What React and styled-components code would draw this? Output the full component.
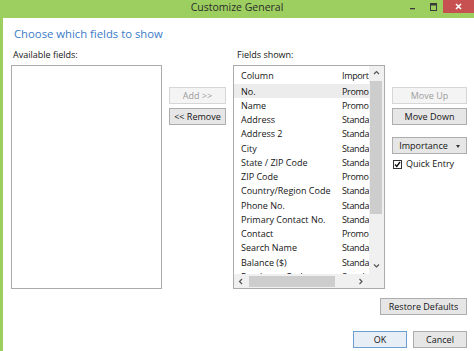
import React from 'react';
import styled, { createGlobalStyle } from 'styled-components';

const FONT = `"Open Sans", "Noto Sans", "DejaVu Sans", sans-serif`;

const Global = createGlobalStyle`
  html, body { margin: 0; padding: 0; background: #fff; }
  body { font-family: ${FONT}; }
  * { box-sizing: border-box; }
`;

const Window = styled.div`
  width: 474px;
  height: 351px;
  background: #9ccf5f;
  display: flex;
  flex-direction: column;
  overflow: hidden;
  font-family: ${FONT};
  font-size: 9px;
  color: #151515;
`;

const TitleBar = styled.div`
  height: 18px;
  flex: none;
  display: grid;
  grid-template-columns: 1fr auto 1fr;
  align-items: start;
`;

const Title = styled.div`
  grid-column: 2;
  font-size: 10.5px;
  line-height: 15px;
  color: #2a2a2a;
`;

const Controls = styled.div`
  grid-column: 3;
  justify-self: end;
  display: flex;
  height: 13px;
`;

const CtrlButton = styled.div`
  width: ${(p) => p.$w}px;
  height: 13px;
  display: flex;
  align-items: center;
  justify-content: center;
  background: ${(p) => (p.$close ? '#c75050' : 'transparent')};
`;

const Content = styled.div`
  flex: 1;
  margin-left: 3px;
  background: #fff;
  padding: 8px 7px 0 8px;
  display: flex;
  flex-direction: column;
`;

const Heading = styled.div`
  font-size: 11.3px;
  line-height: 16px;
  color: #3a7bc8;
  margin-left: 3px;
`;

const Main = styled.div`
  margin-top: 7px;
  display: grid;
  grid-template-columns: 151px 57px 152px 75px;
  grid-template-rows: auto 224px;
  column-gap: 7px;
  row-gap: 4px;
`;

const Label = styled.div`
  grid-column: ${(p) => p.$col};
  line-height: 12px;
  margin-left: ${(p) => p.$indent}px;
`;

const ListBox = styled.div`
  grid-column: 1;
  grid-row: 2;
  border: 1px solid #ababab;
  background: #fff;
`;

const ButtonColumn = styled.div`
  grid-column: ${(p) => p.$col};
  grid-row: 2;
  display: flex;
  flex-direction: column;
  gap: 4px;
  padding-top: 22px;
`;

const Button = styled.div`
  height: 17px;
  width: ${(p) => (p.$w ? `${p.$w}px` : 'auto')};
  border: 1px solid ${(p) => (p.$disabled ? '#d6d6d6' : p.$default ? '#6c9fcf' : '#adadad')};
  background: ${(p) => (p.$disabled ? '#f4f4f4' : p.$default ? '#e8eef5' : '#e6e6e6')};
  color: ${(p) => (p.$disabled ? '#9c9c9c' : '#151515')};
  display: flex;
  align-items: center;
  justify-content: center;
  font-size: 9px;
  line-height: 15px;
  white-space: nowrap;
  margin-top: ${(p) => p.$mt || 0}px;
  position: relative;
`;

const ButtonText = styled.span`
  margin-right: ${(p) => p.$shift || 0}px;
`;

const DropArrow = styled.span`
  position: absolute;
  right: 6px;
  top: 7px;
  width: 0;
  height: 0;
  border-left: 2px solid transparent;
  border-right: 2px solid transparent;
  border-top: 3px solid #333;
`;

const CheckRow = styled.label`
  display: flex;
  align-items: center;
  gap: 4px;
  padding-left: 1px;
  line-height: 12px;
`;

const CheckBox = styled.span`
  width: 9px;
  height: 9px;
  border: 1px solid #333;
  background: #fff;
  display: flex;
  align-items: center;
  justify-content: center;
`;

const FieldList = styled.div`
  grid-column: 3;
  grid-row: 2;
  border: 1px solid #ababab;
  background: #fff;
  display: grid;
  grid-template-columns: 1fr 15px;
  grid-template-rows: 1fr 14px;
  overflow: hidden;
`;

const TableArea = styled.div`
  overflow: hidden;
  display: flex;
  flex-direction: column;
`;

const Row = styled.div`
  flex: none;
  display: grid;
  grid-template-columns: 101px auto;
  align-items: center;
  padding-left: 7px;
  height: ${(p) => (p.$header ? '18px' : '14.25px')};
  background: ${(p) => (p.$selected ? '#ececec' : 'transparent')};
  white-space: nowrap;
`;

const Cell = styled.span`
  letter-spacing: ${(p) => (p.$narrow ? '-0.35px' : 'normal')};
`;

const VScroll = styled.div`
  background: #f0f0f0;
  display: flex;
  flex-direction: column;
`;

const HScroll = styled.div`
  background: #f0f0f0;
  display: flex;
`;

const Arrow = styled.div`
  flex: none;
  width: 15px;
  height: ${(p) => (p.$h ? '14px' : '15px')};
  display: flex;
  align-items: center;
  justify-content: center;
`;

const VThumb = styled.div`
  height: 133px;
  margin: 0 2px 0 1px;
  background: #cdcdcd;
`;

const HThumb = styled.div`
  width: 86px;
  margin: 2px 0 1px 0;
  background: #cdcdcd;
`;

const Spacer = styled.div`
  flex: 1;
`;

const Corner = styled.div`
  background: #f0f0f0;
`;

const Footer = styled.div`
  display: flex;
  justify-content: flex-end;
  gap: 6px;
  margin-top: ${(p) => p.$mt}px;
`;

const Chevron = ({ dir }) => {
  const pts = {
    up: '1,4 3.5,1.5 6,4',
    down: '1,1.5 3.5,4 6,1.5',
    left: '4,1 1.5,3.5 4,6',
    right: '1.5,1 4,3.5 1.5,6',
  }[dir];
  return (
    <svg width="7" height="7" viewBox="0 0 7 7">
      <polyline points={pts} fill="none" stroke="#555" strokeWidth="1.2" />
    </svg>
  );
};

const rows = [
  ['No.', 'Promo'],
  ['Name', 'Promo'],
  ['Address', 'Standa'],
  ['Address 2', 'Standa'],
  ['City', 'Standa'],
  ['State / ZIP Code', 'Standa'],
  ['ZIP Code', 'Promo'],
  ['Country/Region Code', 'Standa'],
  ['Phone No.', 'Standa'],
  ['Primary Contact No.', 'Standa'],
  ['Contact', 'Promo'],
  ['Search Name', 'Standa'],
  ['Balance ($)', 'Standa'],
  ['Purchaser Code', 'Standa'],
];

export default function App() {
  return (
    <>
      <Global />
      <Window>
        <TitleBar>
          <Title>Customize General</Title>
          <Controls>
            <CtrlButton $w={20}>
              <svg width="6" height="6" viewBox="0 0 6 6">
                <rect x="0" y="4" width="5" height="1.3" fill="#3a3a3a" />
              </svg>
            </CtrlButton>
            <CtrlButton $w={20}>
              <svg width="7" height="8" viewBox="0 0 7 8">
                <rect x="0.5" y="0.5" width="6" height="7" fill="none" stroke="#3a3a3a" />
                <rect x="0" y="0" width="7" height="2.5" fill="#3a3a3a" />
              </svg>
            </CtrlButton>
            <CtrlButton $w={31} $close>
              <svg width="7" height="7" viewBox="0 0 7 7">
                <path d="M1 1 L6 6 M6 1 L1 6" stroke="#fff" strokeWidth="1.5" />
              </svg>
            </CtrlButton>
          </Controls>
        </TitleBar>
        <Content>
          <Heading>Choose which fields to show</Heading>
          <Main>
            <Label $col={1} $indent={2}>Available fields:</Label>
            <Label $col={3} $indent={4}>Fields shown:</Label>
            <ListBox />
            <ButtonColumn $col={2}>
              <Button $disabled>Add &gt;&gt;</Button>
              <Button>&lt;&lt; Remove</Button>
            </ButtonColumn>
            <FieldList>
              <TableArea>
                <Row $header>
                  <Cell>Column</Cell>
                  <Cell $narrow>Import</Cell>
                </Row>
                {rows.map(([c, i], idx) => (
                  <Row key={c} $selected={idx === 0}>
                    <Cell>{c}</Cell>
                    <Cell $narrow>{i}</Cell>
                  </Row>
                ))}
              </TableArea>
              <VScroll>
                <Arrow><Chevron dir="up" /></Arrow>
                <VThumb />
                <Spacer />
                <Arrow><Chevron dir="down" /></Arrow>
              </VScroll>
              <HScroll>
                <Arrow $h><Chevron dir="left" /></Arrow>
                <HThumb />
                <Spacer />
                <Arrow $h><Chevron dir="right" /></Arrow>
              </HScroll>
              <Corner />
            </FieldList>
            <ButtonColumn $col={4}>
              <Button $disabled>Move Up</Button>
              <Button>Move Down</Button>
              <Button $mt={8}>
                <ButtonText $shift={12}>Importance</ButtonText>
                <DropArrow />
              </Button>
              <CheckRow>
                <CheckBox>
                  <svg width="7" height="7" viewBox="0 0 7 7">
                    <polyline points="1,3.5 2.8,5.5 6,1" fill="none" stroke="#111" strokeWidth="1.4" />
                  </svg>
                </CheckBox>
                Quick Entry
              </CheckRow>
            </ButtonColumn>
          </Main>
          <Footer $mt={9}>
            <Button $w={87}>Restore Defaults</Button>
          </Footer>
          <Footer $mt={16}>
            <Button $w={54} $default>OK</Button>
            <Button $w={54}>Cancel</Button>
          </Footer>
        </Content>
      </Window>
    </>
  );
}
